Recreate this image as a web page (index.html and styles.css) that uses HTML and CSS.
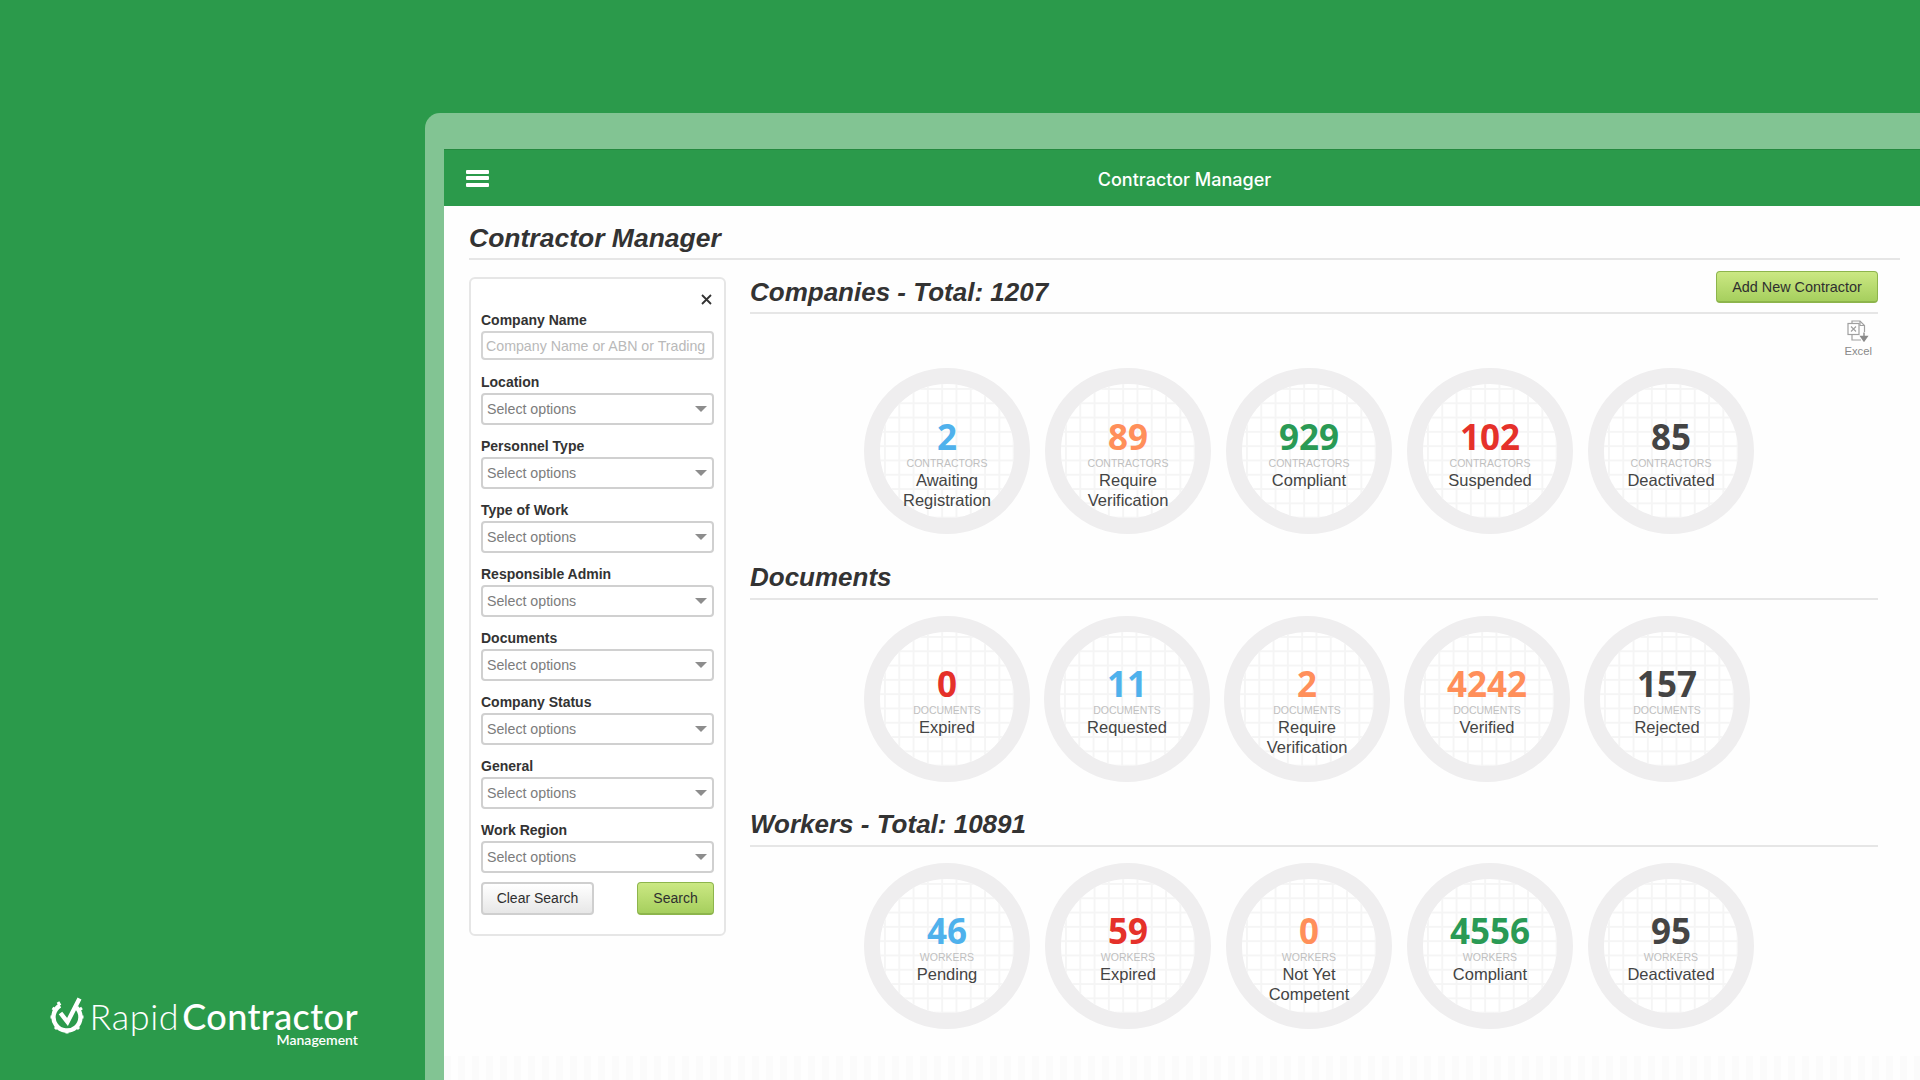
FILE: index.html
```html
<!DOCTYPE html>
<html lang="en">
<head>
<meta charset="utf-8">
<title>Contractor Manager</title>
<link rel="stylesheet" href="styles.css">
</head>
<body>
<div class="logo">
  <svg class="logo-mark" width="40" height="40" viewBox="0 0 40 40" fill="none" stroke="#fff">
    <path d="M28.500 11.500A13.500 13.500 0 1 1 12 9.500" stroke-width="4.400"/>
    <path d="M6 21H2.500M9.500 30.500L7 33M19 34v3.500M28.500 30.500L31 33M32 21h3.500M31 14l3-2M7.500 14l-3-2M12 9.500L10 6" stroke-width="3"/>
    <path d="M12.500 17l7 9L31.500 2.500" stroke-width="4.400"/>
  </svg>
  <div class="logo-text">
    <div class="logo-name"><span class="logo-light">Rapid</span><span class="logo-strong">Contractor</span></div>
    <div class="logo-sub">Management</div>
  </div>
</div>
<div class="frame">
  <div class="app">
    <header class="topbar">
      <div class="burger"><i></i><i></i><i></i></div>
      <div class="topbar-title">Contractor Manager</div>
    </header>
    <div class="page">
      <h1 class="page-title">Contractor Manager</h1>
      <div class="columns">
        <aside class="filters">
          <div class="filters-close">
            <svg width="11" height="11" viewBox="0 0 11 11" stroke="#333" stroke-width="1.800"><path d="M1 1l9 9M10 1l-9 9"/></svg>
          </div>
          <div class="field field-first"><label>Company Name</label><input class="text-input" type="text" placeholder="Company Name or ABN or Trading"></div>
          <div class="field"><label>Location</label><div class="select"><span>Select options</span><i></i></div></div>
          <div class="field"><label>Personnel Type</label><div class="select"><span>Select options</span><i></i></div></div>
          <div class="field"><label>Type of Work</label><div class="select"><span>Select options</span><i></i></div></div>
          <div class="field"><label>Responsible Admin</label><div class="select"><span>Select options</span><i></i></div></div>
          <div class="field"><label>Documents</label><div class="select"><span>Select options</span><i></i></div></div>
          <div class="field"><label>Company Status</label><div class="select"><span>Select options</span><i></i></div></div>
          <div class="field"><label>General</label><div class="select"><span>Select options</span><i></i></div></div>
          <div class="field field-last"><label>Work Region</label><div class="select"><span>Select options</span><i></i></div></div>
          <div class="filter-actions">
            <button class="btn btn-plain btn-clear">Clear Search</button>
            <button class="btn btn-green btn-search">Search</button>
          </div>
        </aside>
        <main class="dash">
          <div class="section-head section-first">
            <h2>Companies - Total: 1207</h2>
            <button class="btn btn-green btn-add">Add New Contractor</button>
          </div>
          <div class="tools">
            <div class="excel">
              <svg width="22" height="22" viewBox="0 0 22 22" fill="none" stroke="#a0a0a0" stroke-width="1.200">
                <path d="M5 3.500V1h8l4.500 4.500V12"/><path d="M13 1v4.500h4.500"/>
                <rect x="1" y="3.500" width="11" height="11" fill="#fff"/>
                <path d="M4 6.500l5 5M9 6.500l-5 5"/>
                <path d="M5 14.500V20h9"/>
                <path d="M17 12.500v4.500M13.800 16.500h6.400L17 21z" fill="#8a8a8a" stroke="#8a8a8a" stroke-width="1.400"/>
              </svg>
              <span>Excel</span>
            </div>
          </div>
          <div class="rings">
            <div class="ring"><b class="c-blue">2</b><small>CONTRACTORS</small><span>Awaiting Registration</span></div>
            <div class="ring"><b class="c-orange">89</b><small>CONTRACTORS</small><span>Require Verification</span></div>
            <div class="ring"><b class="c-green">929</b><small>CONTRACTORS</small><span>Compliant</span></div>
            <div class="ring"><b class="c-red">102</b><small>CONTRACTORS</small><span>Suspended</span></div>
            <div class="ring"><b class="c-dark">85</b><small>CONTRACTORS</small><span>Deactivated</span></div>
          </div>
          <div class="section-head"><h2>Documents</h2></div>
          <div class="rings rings-tight">
            <div class="ring"><b class="c-red">0</b><small>DOCUMENTS</small><span>Expired</span></div>
            <div class="ring"><b class="c-blue">11</b><small>DOCUMENTS</small><span>Requested</span></div>
            <div class="ring"><b class="c-orange">2</b><small>DOCUMENTS</small><span>Require Verification</span></div>
            <div class="ring"><b class="c-orange">4242</b><small>DOCUMENTS</small><span>Verified</span></div>
            <div class="ring"><b class="c-dark">157</b><small>DOCUMENTS</small><span>Rejected</span></div>
          </div>
          <div class="section-head section-short"><h2>Workers - Total: 10891</h2></div>
          <div class="rings">
            <div class="ring"><b class="c-blue">46</b><small>WORKERS</small><span>Pending</span></div>
            <div class="ring"><b class="c-red">59</b><small>WORKERS</small><span>Expired</span></div>
            <div class="ring"><b class="c-orange">0</b><small>WORKERS</small><span>Not Yet Competent</span></div>
            <div class="ring"><b class="c-green">4556</b><small>WORKERS</small><span>Compliant</span></div>
            <div class="ring"><b class="c-dark">95</b><small>WORKERS</small><span>Deactivated</span></div>
          </div>
        </main>
      </div>
    </div>
  </div>
</div>
</body>
</html>
```
FILE: styles.css
```css
* { box-sizing: border-box; }
html, body { margin: 0; height: 100%; }
body {
  position: relative;
  width: 1920px;
  height: 1080px;
  overflow: hidden;
  background: #2b9a4b;
  font-family: "Liberation Sans", Arial, sans-serif;
  color: #333;
  padding: 113px 0 0 425px;
}
.logo {
  position: absolute;
  left: 48px;
  top: 996px;
  display: flex;
  color: #fff;
}
.logo-mark { margin-right: 1.500px; flex: none; }
.logo-text { display: flex; flex-direction: column; align-items: flex-end; padding-top: 3px; }
.logo-name { font-family: Lato, sans-serif; font-size: 36px; line-height: 35px; white-space: nowrap; }
.logo-light { font-weight: 300; letter-spacing: .6px; margin-right: 3px; }
.logo-strong { font-weight: 500; letter-spacing: .4px; }
.logo-sub { font-family: Lato, sans-serif; font-size: 14px; font-weight: 600; line-height: 13px; margin-top: -1px; }

.frame {
  height: 967px;
  padding: 36px 0 0 19px;
  background: #82c493;
  border-radius: 15px 0 0 0;
}
.app { height: 931px; display: flex; flex-direction: column; }
.topbar {
  height: 57px;
  flex: none;
  display: flex;
  align-items: center;
  padding: 0 0 0 22px;
  background: #2b9a4b;
  border-top: 1px solid #25893f;
}
.burger { width: 23px; display: flex; flex-direction: column; gap: 2.500px; flex: none; }
.burger i { display: block; height: 4px; background: #fff; border-radius: 1px; }
.topbar-title {
  flex: 1;
  text-align: center;
  padding: 2px 40px 0 0;
  color: #fff;
  font-family: Inter, "Liberation Sans", sans-serif;
  font-size: 18px;
  font-weight: 500;
}
.page {
  flex: 1;
  padding: 0 20px 0 25px;
  background:
    repeating-linear-gradient(90deg, #fbfbfb 0 7px, #fefefe 7px 14px) left bottom / 100% 24px no-repeat,
    #fefefe;
}
.page-title {
  margin: 0;
  height: 54px;
  padding-top: 18px;
  font-size: 26.500px;
  line-height: 28px;
  font-weight: 700;
  font-style: italic;
  border-bottom: 2px solid #e6e6e6;
}
.columns { display: flex; gap: 24px; }

.filters {
  width: 257px;
  height: 659px;
  margin-top: 17px;
  flex: none;
  padding: 0 10px;
  background: #fff;
  border: 2px solid #e6e6e6;
  border-radius: 6px;
}
.filters-close { height: 32px; display: flex; justify-content: flex-end; align-items: center; padding: 8px 2px 0 0; }
.field { margin-bottom: 12px; }
.field-first { margin-bottom: 13px; }
.field-last { margin-bottom: 9px; }
.field label { display: block; height: 20px; font-size: 14px; line-height: 19px; font-weight: 700; color: #333; }
.text-input {
  display: block;
  width: 100%;
  height: 29px;
  padding: 0 1px 0 3px;
  border: 2px solid #d4d4d4;
  border-radius: 4px;
  background: #fff;
  font: 14.200px "Liberation Sans", Arial, sans-serif;
  outline: none;
}
.text-input::placeholder { color: #b9b9b9; opacity: 1; }
.select {
  height: 32px;
  display: flex;
  align-items: center;
  justify-content: space-between;
  padding: 0 5px 0 4px;
  border: 2px solid #d0d0d0;
  border-radius: 4px;
  font-size: 14.200px;
  color: #7c7c7c;
  background: #fff;
}
.select i { width: 0; height: 0; border: 6.500px solid transparent; border-top: 6.500px solid #8d8d8d; border-bottom: 0; }
.filter-actions { display: flex; justify-content: space-between; }
.btn {
  height: 33px;
  padding: 0 0 1px;
  border-radius: 4px;
  font: 14px "Liberation Sans", Arial, sans-serif;
  color: #2f2f2f;
  cursor: pointer;
}
.btn-plain { background: linear-gradient(#fff, #e7e7e7); border: 2px solid #cfcfcf; }
.btn-green { background: linear-gradient(#cbe883, #a6cf5e); border: 1px solid #8db54c; border-bottom-width: 2px; }
.btn-clear { width: 113px; }
.btn-search { width: 77px; }
.btn-add { width: 162px; height: 32px; margin-top: 11px; padding: 0; font-size: 14.400px; }

.dash { flex: 1; width: 1128px; margin-right: 22px; }
.section-head {
  height: 66px;
  display: flex;
  justify-content: space-between;
  align-items: flex-end;
  border-bottom: 2px solid #e6e6e6;
}
.section-short { height: 65px; }
.section-first { height: 54px; align-items: flex-start; }
.section-head h2 {
  margin: 0 0 6px;
  font-size: 26px;
  line-height: 30px;
  font-weight: 700;
  font-style: italic;
  color: #333;
}
.section-first h2 { margin-top: 17px; }
.tools { height: 54px; display: flex; justify-content: flex-end; padding: 6px 6px 0 0; }
.excel { display: flex; flex-direction: column; align-items: center; font-size: 11.300px; line-height: 13px; color: #8a8a8a; }
.excel svg { display: block; margin-bottom: 3px; }
.rings { display: flex; gap: 15px; padding: 0 0 0 114px; }
.section-head + .rings { margin-top: 16px; }
.rings-tight { gap: 14px; }
.ring {
  width: 166px;
  height: 166px;
  flex: none;
  display: flex;
  flex-direction: column;
  align-items: center;
  padding-top: 33px;
  border: 16px solid #efeeef;
  border-radius: 50%;
  text-align: center;
  background:
    linear-gradient(#f5f5f5 2px, transparent 2px) 0 4px / 14.300px 14.300px,
    linear-gradient(90deg, #f5f5f5 2px, transparent 2px) 4px 0 / 14.300px 14.300px,
    #fff;
  background-clip: padding-box;
}
.section-head + .rings .ring { padding-top: 32px; }
.ring b { font-family: "Open Sans", sans-serif; font-weight: 700; font-size: 35px; line-height: 40px; height: 40px; }
.ring small { font-size: 10.500px; line-height: 13px; color: #bfbfbf; }
.ring span { font-size: 16.500px; line-height: 20px; color: #444; width: 110px; }
.c-blue { color: #4fb1ec; }
.c-orange { color: #ff8f5a; }
.c-green { color: #2a9a55; }
.c-red { color: #e5312a; }
.c-dark { color: #444; }
```
